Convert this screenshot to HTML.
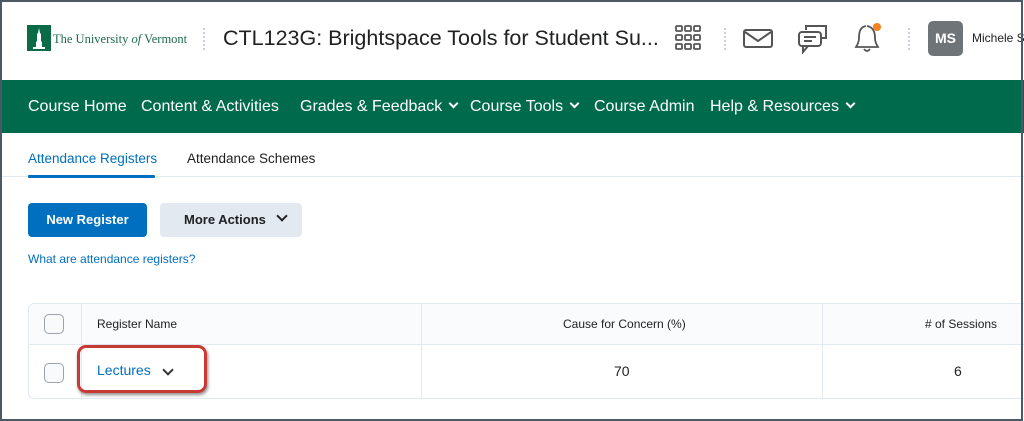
<!DOCTYPE html>
<html><head><meta charset="utf-8"><style>
*{margin:0;padding:0;box-sizing:border-box}
body{width:1024px;height:421px;overflow:hidden;background:#fff;font-family:"Liberation Sans",sans-serif;position:relative}
.frame{position:absolute;left:0;top:0;width:1023px;height:421px;border:2px solid #4d5964;z-index:10;pointer-events:none}
.a{position:absolute;white-space:nowrap}
.nav{position:absolute;left:0;top:80px;width:1024px;height:53px;background:#006a4d}
.nav span{position:absolute;top:18px;color:#fff;font-size:16px}
.chev{display:inline-block;width:7px;height:7px;border-right:2px solid currentColor;border-bottom:2px solid currentColor;transform:rotate(45deg);margin-left:8px;position:relative;top:-4px}
.cb{position:absolute;width:20px;height:20px;border:1px solid #9aa3ad;border-radius:5px;background:#f8fafc}
</style></head><body>
<div class="frame"></div>
<div class="a" style="left:27px;top:25px;width:24px;height:26px;background:#0b6b47">
<svg width="24" height="26" viewBox="0 0 24 26"><path d="M12 3 L13 8 L14 9 L14 16 L15 17 L15 22 L18 22 L18 24 L6 24 L6 22 L9 22 L9 17 L10 16 L10 9 L11 8 Z" fill="#fff"/></svg></div>
<div class="a" style="left:53px;top:32px;font-family:'Liberation Serif',serif;font-size:12.5px;color:#1d6b4c">The University <i>of</i> Vermont</div>
<div class="a" style="left:203px;top:28px;height:22px;border-left:2px dotted #c8d0d8"></div>
<div class="a" style="left:223px;top:26px;font-size:21.5px;color:#202122">CTL123G: Brightspace Tools for Student Su...</div>
<svg class="a" style="left:675px;top:25px" width="28" height="26" viewBox="0 0 28 26" fill="none" stroke="#555" stroke-width="1.8">
<rect x="1" y="1" width="6" height="5" rx="1"/><rect x="10" y="1" width="6" height="5" rx="1"/><rect x="19" y="1" width="6" height="5" rx="1"/>
<rect x="1" y="10" width="6" height="5" rx="1"/><rect x="10" y="10" width="6" height="5" rx="1"/><rect x="19" y="10" width="6" height="5" rx="1"/>
<rect x="1" y="19" width="6" height="5" rx="1"/><rect x="10" y="19" width="6" height="5" rx="1"/><rect x="19" y="19" width="6" height="5" rx="1"/></svg>
<div class="a" style="left:724px;top:28px;height:22px;border-left:2px dotted #c8d0d8"></div>
<svg class="a" style="left:743px;top:29px" width="30" height="20" viewBox="0 0 30 20" fill="none" stroke="#555" stroke-width="2"><rect x="1" y="1" width="28" height="17" rx="2"/><path d="M2 3 L15 12 L28 3"/></svg>
<svg class="a" style="left:797px;top:24px" width="32" height="30" viewBox="0 0 32 30" fill="none" stroke="#555" stroke-width="2"><path d="M9 6 V2 H29 V14 H25"/><rect x="2" y="8" width="22" height="14" rx="3"/><path d="M6 22 L6 28 L11 22"/><path d="M7 13 H19 M7 17 H15"/></svg>
<svg class="a" style="left:853px;top:22px" width="30" height="32" viewBox="0 0 30 32" fill="none" stroke="#555" stroke-width="1.8"><path d="M13 4 C7 5 6 10 6 16 C6 21 4 23 3 25 H25 C24 23 22 21 22 16 C22 10 20 5 14 4"/><path d="M11 27 Q14 31 17 27"/><circle cx="24" cy="5" r="4" fill="#f5821f" stroke="none"/></svg>
<div class="a" style="left:908px;top:28px;height:22px;border-left:2px dotted #c8d0d8"></div>
<div class="a" style="left:928px;top:21px;width:35px;height:35px;border-radius:5px;background:#6e7477;color:#fff;font-size:14px;font-weight:bold;text-align:center;line-height:35px">MS</div>
<div class="a" style="left:972px;top:31px;font-size:12px;color:#202122">Michele Sm</div>
<div class="nav">
<span style="left:28px">Course Home</span>
<span style="left:141px">Content &amp; Activities</span>
<span style="left:300px">Grades &amp; Feedback<i class="chev"></i></span>
<span style="left:470px">Course Tools<i class="chev"></i></span>
<span style="left:594px">Course Admin</span>
<span style="left:710px">Help &amp; Resources<i class="chev"></i></span>
</div>
<div class="a" style="left:28px;top:151px;font-size:13.5px;color:#006fbf">Attendance Registers</div>
<div class="a" style="left:187px;top:151px;font-size:13.5px;color:#202122">Attendance Schemes</div>
<div class="a" style="left:0;top:176px;width:1024px;height:1px;background:#e3e9f1"></div>
<div class="a" style="left:28px;top:175px;width:127px;height:3px;background:#006fbf;border-radius:1px"></div>
<div class="a" style="left:28px;top:203px;width:119px;height:34px;background:#006fbf;border-radius:4px;color:#fff;font-size:13px;font-weight:bold;text-align:center;line-height:34px">New Register</div>
<div class="a" style="left:160px;top:203px;width:142px;height:34px;background:#e3e9f1;border-radius:4px;color:#202122;font-size:13px;font-weight:bold;line-height:34px;padding-left:24px">More Actions<i class="chev" style="margin-left:12px;width:8px;height:8px;border-width:2.5px"></i></div>
<div class="a" style="left:28px;top:252px;font-size:12px;color:#006fbf">What are attendance registers?</div>
<div class="a" style="left:28px;top:303px;width:1000px;height:96px;border:1px solid #e3e9f1;border-radius:6px;overflow:hidden">
<div style="position:absolute;left:0;top:0;width:100%;height:41px;background:#f9fbfd;border-bottom:1px solid #e3e9f1"></div>
<div style="position:absolute;left:52px;top:0;height:100%;border-left:1px solid #e3e9f1"></div>
<div style="position:absolute;left:392px;top:0;height:100%;border-left:1px solid #e3e9f1"></div>
<div style="position:absolute;left:793px;top:0;height:100%;border-left:1px solid #e3e9f1"></div>
</div>
<div class="cb" style="left:44px;top:314px"></div>
<div class="cb" style="left:44px;top:363px"></div>
<div class="a" style="left:97px;top:317px;font-size:12px;color:#202122">Register Name</div>
<div class="a" style="left:563px;top:317px;font-size:12px;color:#202122">Cause for Concern (%)</div>
<div class="a" style="left:925px;top:317px;font-size:12px;color:#202122">#&nbsp;of Sessions</div>
<div class="a" style="left:614px;top:363px;font-size:14px;color:#202122">70</div>
<div class="a" style="left:954px;top:363px;font-size:14px;color:#202122">6</div>
<div class="a" style="left:77px;top:345px;width:130px;height:48px;border:3px solid #c63a33;border-radius:9px;box-shadow:1px 2px 3px rgba(0,0,0,.45)"></div>
<div class="a" style="left:97px;top:362px;font-size:14px;color:#006fbf">Lectures</div>
<i class="a" style="left:164px;top:366px;width:8px;height:8px;border-right:2.5px solid #333;border-bottom:2.5px solid #333;transform:rotate(45deg)"></i>
</body></html>
